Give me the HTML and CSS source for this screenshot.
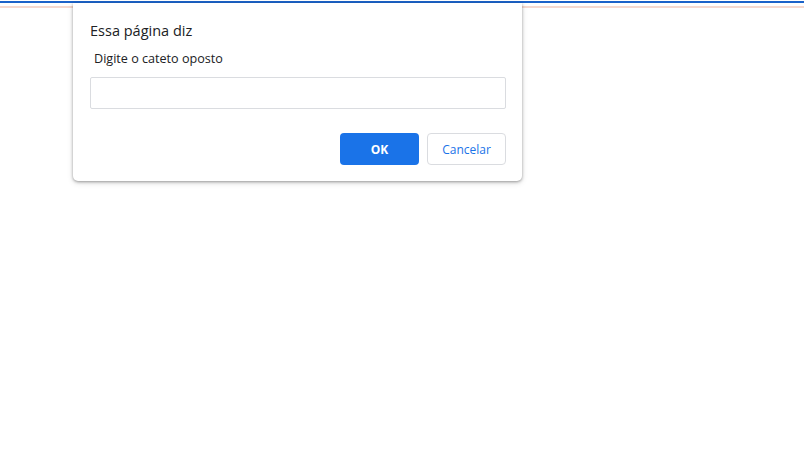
FILE: index.html
```html
<!DOCTYPE html>
<html lang="pt">
<head>
  <meta charset="UTF-8">
  <title>Cateto</title>
  <link rel="stylesheet" href="styles.css">
</head>
<body>
  <div class="top-line"></div>
  <div class="tab-line"></div>

  <div class="dialog">
    <div class="dialog-title">Essa página diz</div>
    <div class="dialog-msg">Digite o cateto oposto</div>
    <input class="dialog-input" type="text">
    <div class="dialog-btns">
      <button class="ok-btn">OK</button>
      <button class="cancel-btn">Cancelar</button>
    </div>
  </div>
</body>
</html>
```

FILE: styles.css
```css
body {
  margin: 0;
  background: #fff;
  font-family: 'Open Sans', 'Noto Sans', sans-serif;
  height: 100vh;
  overflow: hidden;
}
.top-line {
  margin-top: 1px;
  height: 2px;
  background: #1c63c9;
}
.tab-line {
  margin-top: 3px;
  height: 2px;
  background: #f5d9cf;
}
.dialog {
  position: absolute;
  top: 3px;
  left: 73px;
  width: 449px;
  box-sizing: border-box;
  background: #fff;
  border-radius: 0 0 5px 5px;
  box-shadow: 0 1px 3px rgba(0,0,0,0.35), 0 2px 6px rgba(0,0,0,0.12);
  padding: 18px 16px 16px 17px;
}
.dialog-title {
  font-size: 14.5px;
  color: #202124;
  line-height: 20px;
}
.dialog-msg {
  margin-top: 9px;
  padding-left: 4px;
  font-size: 12.6px;
  color: #202124;
  line-height: 18px;
}
.dialog-input {
  display: block;
  margin-top: 9px;
  width: 100%;
  height: 32px;
  box-sizing: border-box;
  border: 1px solid #dadce0;
  border-radius: 2px;
  outline: none;
}
.dialog-btns {
  display: flex;
  justify-content: flex-end;
  gap: 8px;
  margin-top: 24px;
}
.dialog-btns button {
  width: 79px;
  height: 32px;
  border-radius: 4px;
  font-family: inherit;
  font-size: 12px;
  cursor: pointer;
}
.ok-btn {
  background: #1a73e8;
  border: none;
  color: #fff;
  font-weight: bold;
}
.cancel-btn {
  background: #fff;
  border: 1px solid #dadce0;
  color: #1a73e8;
}
```
